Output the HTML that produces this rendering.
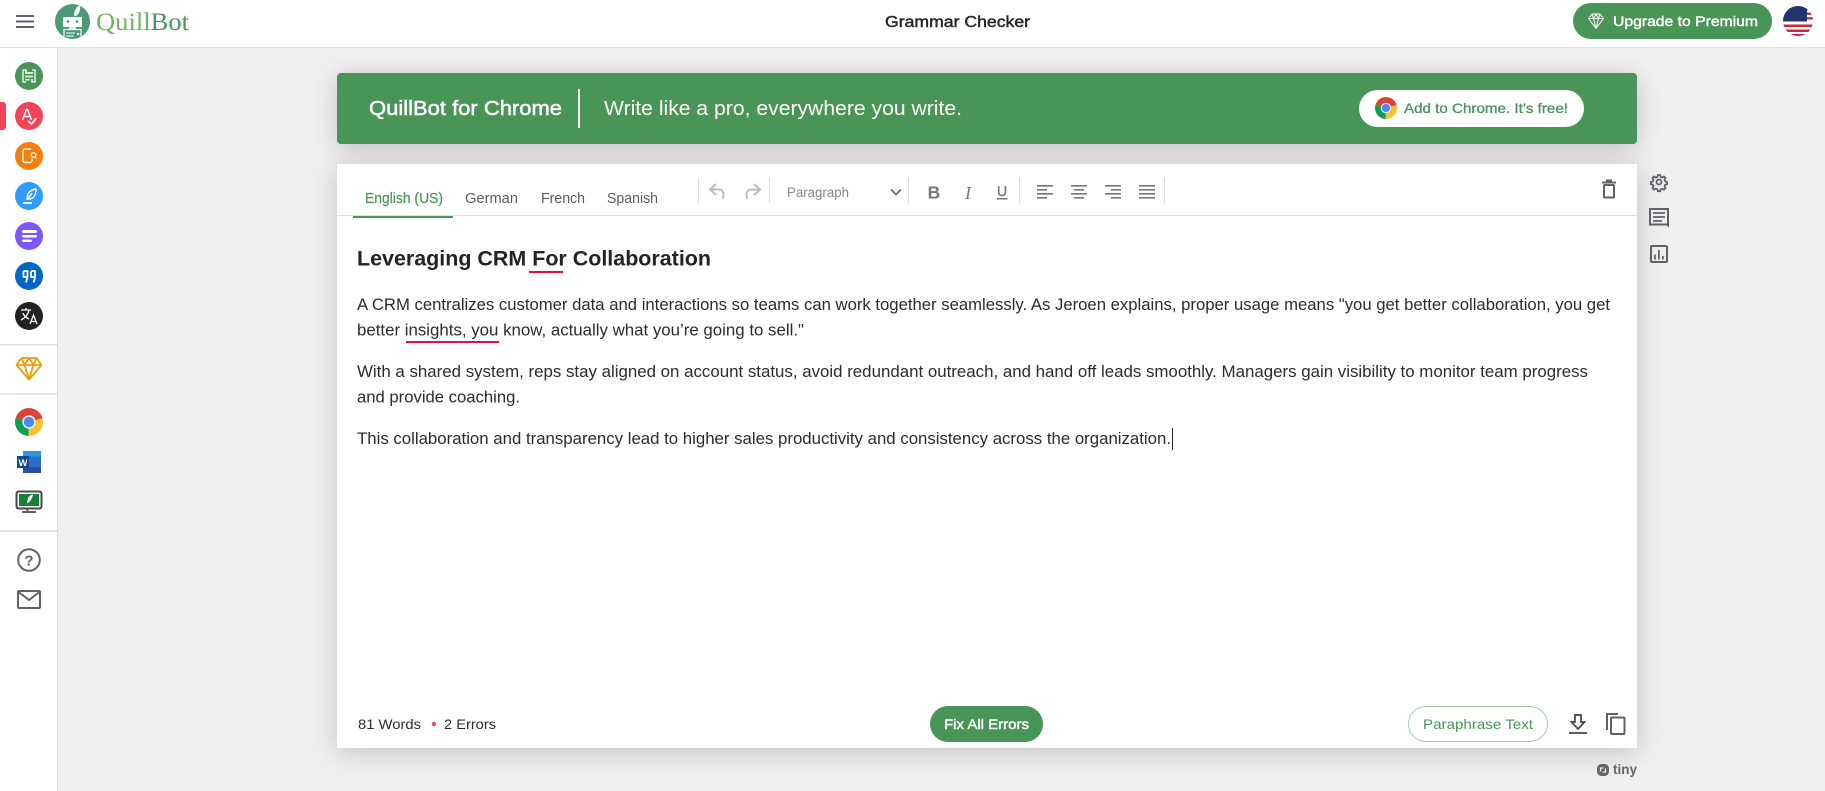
<!DOCTYPE html>
<html lang="en"><head><meta charset="utf-8"><title>Grammar Checker</title>
<style>
html,body{margin:0;padding:0;width:1825px;height:791px;overflow:hidden;background:#f0f0f0;font-family:"Liberation Sans",sans-serif}
.abs{position:absolute}
svg{position:absolute;left:0;top:0}
text{font-family:"Liberation Sans",sans-serif}
.b{font-weight:700}
</style></head><body>
<div class="abs" style="left:0;top:0;width:1825px;height:47px;background:#fff;border-bottom:1px solid #e0e0e0"></div>
<div class="abs" style="left:0;top:48px;width:57px;height:743px;background:#fff;border-right:1.5px solid #e0e0e0"></div>
<div class="abs" style="left:337px;top:73px;width:1300px;height:71px;background:#499557;border-radius:4px;box-shadow:0 4px 26px rgba(0,0,0,.2)"></div>
<div class="abs" style="left:337px;top:164px;width:1300px;height:584px;background:#fff;box-shadow:0 4px 26px rgba(0,0,0,.2)"></div>
<svg width="1825" height="791" viewBox="0 0 1825 791" xmlns="http://www.w3.org/2000/svg">
<defs>
<symbol id="chrome" viewBox="-1 -1 2 2">
<circle r="1" fill="#fbc02d"/>
<path d="M0 0L-.05 1A1 1 0 0 1-.95-.3Z" fill="#0f9d58"/>
<path d="M0 0L-.95-.3A1 1 0 0 1 .96-.28Z" fill="#db4437"/>
<circle r=".48" fill="#dfe8f5"/><circle r=".37" fill="#4f86ec"/>
</symbol>
<clipPath id="flagc"><circle cx="1798" cy="21" r="15"/></clipPath>
<clipPath id="logoc"><circle cx="72.5" cy="21.5" r="17.5"/></clipPath>
</defs>

<!-- header -->
<g fill="#5f6368"><rect x="16" y="15" width="18" height="2"/><rect x="16" y="20.5" width="18" height="2"/><rect x="16" y="26" width="18" height="2"/></g>
<circle cx="72.5" cy="21.5" r="17.5" fill="#4b9a78"/>
<g clip-path="url(#logoc)">
<path d="M74 16C74 11 76 7 80 5C81 9 79 14 76 16Z" fill="#fff"/>
<rect x="63" y="17" width="19" height="10" rx="1" fill="#fff"/>
<circle cx="68" cy="21.5" r="1.3" fill="#3c8a68"/><circle cx="77" cy="21.5" r="1.3" fill="#3c8a68"/>
<rect x="69" y="27" width="7" height="2" fill="#d7e9e0"/>
<rect x="64" y="29.5" width="17" height="12" fill="none" stroke="#fff" stroke-width="1.2"/>
<path d="M66 33h9M66 36h8" stroke="#fff"/><circle cx="78" cy="34" r="1.2" fill="#fff"/>
</g>
<text x="96" y="30" font-size="25" style="font-family:'Liberation Serif',serif" textLength="93" lengthAdjust="spacingAndGlyphs"><tspan fill="#71b35f">Quill</tspan><tspan fill="#4a9557">Bot</tspan></text>
<text x="885" y="27" font-size="15.5" fill="#252525" stroke="#252525" stroke-width=".45" textLength="145" lengthAdjust="spacingAndGlyphs">Grammar Checker</text>
<rect x="1573" y="3" width="199" height="36" rx="18" fill="#499557"/>
<g fill="none" stroke="#fff" stroke-width="1" stroke-linejoin="round"><path d="M1592 14h8l3.500 4.500-7.500 10-7.500-10ZM1588.500 18.500h15M1592 14l1.500 4.500 2.500 10 2.500-10 1.500-4.500M1596 14l-2.500 4.500M1596 14l2.500 4.500"/></g>
<text x="1613" y="26" font-size="14" fill="#fff" stroke="#fff" stroke-width=".45" textLength="145" lengthAdjust="spacingAndGlyphs">Upgrade to Premium</text>
<g clip-path="url(#flagc)">
<rect x="1783" y="6" width="30" height="30" fill="#fff"/>
<g fill="#d0243f"><rect x="1783" y="8" width="30" height="2.300"/><rect x="1783" y="12.600" width="30" height="2.300"/><rect x="1783" y="17.200" width="30" height="2.300"/><rect x="1783" y="24.500" width="30" height="2.500"/><rect x="1783" y="29.500" width="30" height="2.500"/><rect x="1783" y="34" width="30" height="2"/></g>
<rect x="1783" y="6" width="24" height="15.500" fill="#22356f"/>
</g>

<!-- sidebar -->
<rect x="-4" y="102" width="10" height="28" rx="3" fill="#f44256"/>
<circle cx="29" cy="76" r="14" fill="#499557"/>
<g fill="none" stroke="#fff" stroke-width="1.300"><path d="M26 70h-3v12h3M32 70h3v12h-3"/><path d="M26 73v-3.500M32 79v3.500" stroke-width="1.500"/></g><path d="M25 72h8v2h-8zM25 75.500h8v2h-8zM25 79h5v1.500h-5z" fill="#d8eadb"/>
<circle cx="29" cy="116" r="14" fill="#f44256"/>
<g fill="none" stroke="#fff" stroke-width="1.500"><path d="M22.500 120l4-10.500h1l4 10.500M24 116.500h6"/><path d="M28 121l3.500 3 5-6" stroke-width="1.800"/></g>
<circle cx="29" cy="156" r="14" fill="#f67e0e"/>
<g fill="none" stroke="#fff" stroke-width="1.400"><path d="M31 149h-6a2 2 0 0 0-2 2v9.500a2 2 0 0 0 2 2h5a2 2 0 0 0 2-2v-2"/><circle cx="33.500" cy="155" r="2.300"/><path d="M35 157l1.500 1.500"/></g>
<circle cx="29" cy="196" r="14" fill="#319cff"/>
<g fill="none" stroke="#fff" stroke-width="1.400"><path d="M23 203h9" stroke-width="1.800"/><path d="M36 189c-4 .5-8 3-8.500 7l-.5 3 3 0c3.500-.500 6-4 6-10ZM27 199.500l5-6"/></g>
<circle cx="29" cy="236" r="14" fill="#7c57ff"/>
<g fill="#fff"><rect x="22" y="230" width="15" height="3" rx="1.500"/><rect x="22" y="235" width="15" height="2.500" rx="1.200"/><rect x="22" y="239.500" width="10" height="2.500" rx="1.200"/></g>
<circle cx="29" cy="276" r="14" fill="#0067c5"/>
<g fill="none" stroke="#fff" stroke-width="1.800" stroke-linejoin="round"><path d="M23.500 271h4v6.500l-1.500 5M23.500 271v6h4"/><path d="M31 271h4v6.500l-1.500 5M31 271v6h4"/></g>
<circle cx="29" cy="316" r="14" fill="#222"/>
<g fill="none" stroke="#fff" stroke-width="1.300"><path d="M21 310h10M26 308v2M29 310c-1 5-4 8-8 10M23 313c1 3 4 5 6 6"/><path d="M30 324l3.500-9 3.500 9M31 321.500h5"/></g>
<rect x="0" y="344" width="57" height="1.500" fill="#e0e0e0"/>
<g fill="none" stroke="#e6a10c" stroke-width="1.800" stroke-linejoin="round"><path d="M21.500 358h15l5 7-12.500 14.500L16.500 365Z"/><path d="M16.500 365h25M21.500 358l3 7 4.500 14 4.500-14 3-7M29 358l-4.500 7M29 358l4.500 7"/></g>
<rect x="0" y="393" width="57" height="1.500" fill="#e0e0e0"/>
<use href="#chrome" x="15" y="408" width="28" height="28"/>
<rect x="23" y="451" width="18" height="22" rx="1" fill="#2b6fc6"/><rect x="23" y="451" width="18" height="5.500" fill="#3396dc"/><rect x="23" y="467" width="18" height="6" fill="#284fa6"/>
<rect x="17" y="456" width="12" height="12" fill="#0f4a94"/><text x="23" y="466" font-size="9.500" class="b" fill="#fff" text-anchor="middle">W</text>
<rect x="16.500" y="491.500" width="25" height="17" rx="2" fill="#fff" stroke="#4a4a4a" stroke-width="2"/><rect x="19" y="494" width="20" height="12" fill="#178136"/>
<path d="M33 494.500c-3 .5-5 2.500-5.500 5.500l-.5 3.500c3-2 5-4 6-9Z" fill="#fff"/><path d="M27.500 509v2M22 512h14" stroke="#4a4a4a" stroke-width="1.800" fill="none"/>
<rect x="0" y="530" width="57" height="2" fill="#dfe1e5"/>
<circle cx="29" cy="560" r="10.800" fill="none" stroke="#5f6368" stroke-width="2"/>
<text x="29" y="565.500" font-size="15" class="b" fill="#5f6368" text-anchor="middle">?</text>
<g fill="none" stroke="#5f6368" stroke-width="2"><rect x="18" y="591" width="22" height="17" rx="1"/><path d="M18.500 592l10.500 8 10.500-8"/></g>

<!-- banner -->
<text x="369" y="115" font-size="20" fill="#fff" stroke="#fff" stroke-width=".5" textLength="193" lengthAdjust="spacingAndGlyphs">QuillBot for Chrome</text>
<rect x="578" y="89" width="2" height="39" fill="#fff"/>
<text x="604" y="115" font-size="20.500" fill="#fff" textLength="358" lengthAdjust="spacingAndGlyphs">Write like a pro, everywhere you write.</text>
<rect x="1359" y="90" width="225" height="37" rx="18.500" fill="#fff"/>
<use href="#chrome" x="1375" y="97" width="22" height="22"/>
<text x="1404" y="113" font-size="14" fill="#499557" stroke="#499557" stroke-width=".3" textLength="164" lengthAdjust="spacingAndGlyphs">Add to Chrome. It’s free!</text>

<!-- tabs -->
<g font-size="14.500" fill="#5c5c5c">
<text x="365" y="203" fill="#499557" stroke="#499557" stroke-width=".2" textLength="78" lengthAdjust="spacingAndGlyphs">English (US)</text>
<text x="465" y="203" textLength="53" lengthAdjust="spacingAndGlyphs">German</text>
<text x="541" y="203" textLength="44" lengthAdjust="spacingAndGlyphs">French</text>
<text x="607" y="203" textLength="51" lengthAdjust="spacingAndGlyphs">Spanish</text>
</g>
<rect x="337" y="215" width="1300" height="1" fill="#e0e0e0"/>
<rect x="353" y="216" width="100" height="2" fill="#499557"/>

<!-- toolbar -->
<g fill="#dcdcdc"><rect x="698" y="178" width="1" height="25"/><rect x="769" y="178" width="1" height="25"/><rect x="908" y="178" width="1" height="25"/><rect x="1019" y="178" width="1" height="25"/><rect x="1164" y="178" width="1" height="25"/></g>
<g fill="none" stroke="#bdbdbd" stroke-width="2"><path d="M716 184l-6 5.500 6 5.500M710 189.500h9c3.500 0 4.500 3 4.500 5.500 0 1.500-.5 2.500-1 4"/><path d="M754 184l6 5.500-6 5.500M760 189.500h-9c-3.500 0-4.500 3-4.500 5.500 0 1.500.5 2.500 1 4"/></g>
<text x="787" y="197" font-size="13.500" fill="#888" textLength="62" lengthAdjust="spacingAndGlyphs">Paragraph</text>
<path d="M891 189.500l5 5 5-5" fill="none" stroke="#666" stroke-width="1.600"/>
<text x="934" y="198.500" font-size="17.500" class="b" fill="#767676" text-anchor="middle">B</text>
<text x="968" y="199" font-size="18" fill="#767676" text-anchor="middle" style="font-family:'Liberation Serif',serif;font-style:italic">I</text>
<text x="1002" y="196" font-size="14" fill="#767676" stroke="#767676" stroke-width=".4" text-anchor="middle">U</text><rect x="997" y="198" width="10.500" height="1.500" fill="#767676"/>
<g fill="#767676">
<rect x="1037" y="185" width="16" height="1.600"/><rect x="1037" y="189" width="10" height="1.600"/><rect x="1037" y="193" width="16" height="1.600"/><rect x="1037" y="197" width="10" height="1.600"/>
<rect x="1071" y="185" width="16" height="1.600"/><rect x="1074" y="189" width="10" height="1.600"/><rect x="1071" y="193" width="16" height="1.600"/><rect x="1074" y="197" width="10" height="1.600"/>
<rect x="1105" y="185" width="16" height="1.600"/><rect x="1111" y="189" width="10" height="1.600"/><rect x="1105" y="193" width="16" height="1.600"/><rect x="1111" y="197" width="10" height="1.600"/>
<rect x="1139" y="185" width="16" height="1.600"/><rect x="1139" y="189" width="16" height="1.600"/><rect x="1139" y="193" width="16" height="1.600"/><rect x="1139" y="197" width="16" height="1.600"/>
</g>
<g fill="none" stroke="#5f6368" stroke-width="2"><path d="M1602 182.500h14"/><path d="M1606 180.500h6"/><rect x="1604" y="185" width="10" height="12.500" rx=".8"/></g>

<!-- side icons -->
<g transform="translate(1659 182) scale(.78) translate(-1659 -182)" fill="none" stroke="#5f6368" stroke-width="2.300">
<path d="M1657.500 173h3l.6 2.400 2 .9 2.200-1.300 2.100 2.100-1.300 2.200.9 2 2.400.6v3l-2.400.6-.9 2 1.300 2.200-2.100 2.100-2.200-1.300-2 .9-.6 2.400h-3l-.6-2.400-2-.9-2.200 1.300-2.100-2.100 1.300-2.200-.9-2-2.400-.6v-3l2.400-.6.900-2-1.300-2.200 2.100-2.100 2.200 1.300 2-.9Z"/><circle cx="1659" cy="182" r="3.200"/>
</g>
<g fill="none" stroke="#5f6368" stroke-width="1.700">
<path d="M1650 209h18v15.500h-18Z" stroke-width="2"/><path d="M1653 213h12M1653 217h12M1653 221h9" />
<rect x="1651" y="246" width="16" height="16" rx="1" stroke-width="2"/>
</g>
<path d="M1669 224v3.500l-4-3.500Z" fill="#5f6368"/>
<path d="M1654 254.500h1.800v5H1654ZM1658 250h1.800v9.500H1658ZM1662 256h1.800v3.500H1662Z" fill="#5f6368"/>

<!-- document -->
<text x="357" y="265.500" font-size="21" class="b" fill="#232323" textLength="354" lengthAdjust="spacingAndGlyphs">Leveraging CRM For Collaboration</text>
<rect x="529" y="271" width="34" height="2" fill="#e3103c"/>
<g font-size="16.300" fill="#2c2c2c">
<text x="357" y="310" textLength="1253" lengthAdjust="spacingAndGlyphs">A CRM centralizes customer data and interactions so teams can work together seamlessly. As Jeroen explains, proper usage means "you get better collaboration, you get</text>
<text x="357" y="335.500" textLength="447" lengthAdjust="spacingAndGlyphs">better insights, you know, actually what you’re going to sell."</text>
<text x="357" y="377" textLength="1231" lengthAdjust="spacingAndGlyphs">With a shared system, reps stay aligned on account status, avoid redundant outreach, and hand off leads smoothly. Managers gain visibility to monitor team progress</text>
<text x="357" y="402.500" textLength="163" lengthAdjust="spacingAndGlyphs">and provide coaching.</text>
<text x="357" y="444" textLength="814" lengthAdjust="spacingAndGlyphs">This collaboration and transparency lead to higher sales productivity and consistency across the organization.</text>
</g>
<rect x="406" y="341" width="93" height="2" fill="#e3103c"/>
<rect x="1172" y="428" width="1" height="22" fill="#222"/>

<!-- footer -->
<g font-size="13.500" fill="#2c2c2c">
<text x="358" y="729" textLength="63" lengthAdjust="spacingAndGlyphs">81 Words</text>
<text x="444" y="729" textLength="52" lengthAdjust="spacingAndGlyphs">2 Errors</text>
</g>
<circle cx="434" cy="724" r="2.200" fill="#f44256"/>
<rect x="930" y="706" width="113" height="36" rx="18" fill="#499557"/>
<text x="944" y="729" font-size="13.500" fill="#fff" stroke="#fff" stroke-width=".4" textLength="85" lengthAdjust="spacingAndGlyphs">Fix All Errors</text>
<rect x="1408.500" y="706.500" width="139" height="35" rx="17.500" fill="#fff" stroke="#a5cdaa"/>
<text x="1423" y="729" font-size="14" fill="#499557" textLength="110" lengthAdjust="spacingAndGlyphs">Paraphrase Text</text>
<g fill="none" stroke="#444" stroke-width="1.700"><path d="M1575 715h6v7h3.500l-6.500 7-6.500-7h3.500Z"/><path d="M1569 733h18"/></g>
<g fill="none" stroke="#5f6368" stroke-width="2"><path d="M1618 714h-11v16"/><rect x="1611" y="717.500" width="13.500" height="16.500" rx="1"/></g>
<rect x="1597" y="764" width="12" height="12" rx="4.500" fill="#666"/><path d="M1600.500 771.500v-3.500h3M1605.500 768.500v3.500h-3" fill="none" stroke="#f0f0f0" stroke-width="1.200"/>
<text x="1613" y="774" font-size="14" class="b" fill="#666" textLength="24" lengthAdjust="spacingAndGlyphs">tiny</text>
</svg>
</body></html>
